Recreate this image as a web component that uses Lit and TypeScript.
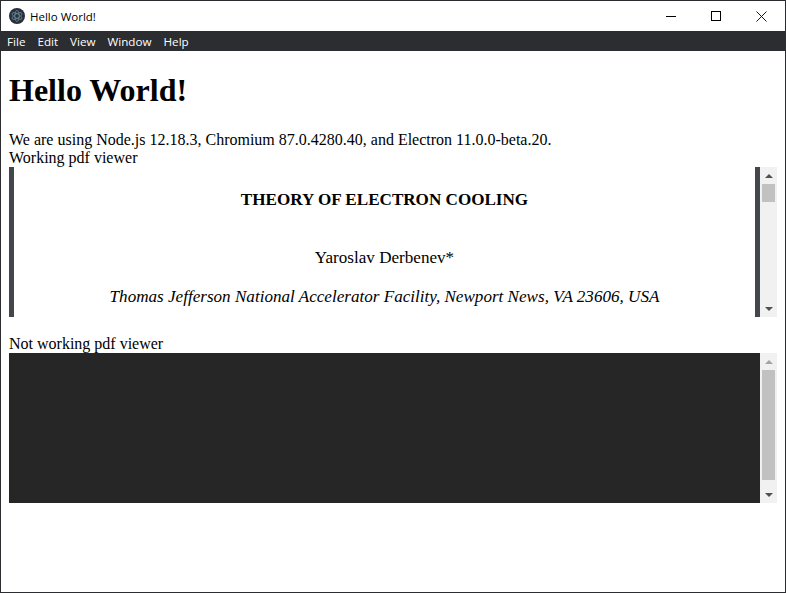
import { LitElement, html, css } from "lit";
import { customElement } from "lit/decorators.js";

@customElement("app-root")
export class AppRoot extends LitElement {
  static styles = css`
    :host { display: block; width: 786px; height: 593px; box-sizing: border-box; border: 1px solid #2b2d31; background: #fff; overflow: hidden; color: #000; font-family: "Liberation Serif", serif; font-size: 16px; line-height: 18px; }
    .title { height: 30px; display: flex; align-items: center; background: #fff; font: 11.5px "Open Sans", "Liberation Sans", sans-serif; padding-right: 1px; }
    .logo { width: 16px; height: 16px; margin: 0 5px 0 8px; flex: none; }
    .name { flex: 1; color: #000; }
    .ctl { width: 45px; height: 30px; display: flex; align-items: center; justify-content: center; }
    .menu { height: 20px; background: #2b2d31; color: #fff; display: flex; font: 11.65px "Open Sans", "Liberation Sans", sans-serif; align-items: center; padding-left: 6px; gap: 12px; }
    .page { padding: 0 8px; }
    h1 { font-size: 32px; line-height: 37px; font-weight: bold; margin: 21px 0 22px; }
    .block { display: block; height: 18px; }
    .viewer { display: flex; height: 150px; width: 768px; }
    .doc { flex: 1; min-width: 0; background: #fff; border-left: 5px solid #43464a; border-right: 5px solid #43464a; text-align: center; overflow: hidden; }
    .doc h2 { font-size: 17.1px; line-height: 21px; font-weight: bold; margin: 22px 0 0; }
    .doc p { font-size: 17.1px; line-height: 21px; margin: 0; }
    .author { padding-top: 37px; }
    .affil { padding-top: 18px; font-style: italic; }
    .dark { flex: 1; background: #262626; }
    .gap { height: 18px; }
    .sb { width: 17px; flex: none; background: #f1f1f1; display: flex; flex-direction: column; }
    .arrow { height: 17px; display: flex; align-items: center; justify-content: center; flex: none; }
    .track { flex: 1; min-height: 0; }
    .thumb { background: #c1c1c1; margin: 0 2px; }
    .s1 { height: 18px; }
    .s2 { height: 110px; }
  `;

  private up(c: string) {
    return html`<div class="arrow"><svg width="8" height="4" viewBox="0 0 8 4"><path d="M4 0 8 4H0Z" fill="${c}" /></svg></div>`;
  }
  private down(c: string) {
    return html`<div class="arrow"><svg width="8" height="4" viewBox="0 0 8 4"><path d="M0 0H8L4 4Z" fill="${c}" /></svg></div>`;
  }

  render() {
    return html`
      <div class="title">
        <svg class="logo" viewBox="0 0 16 16">
          <circle cx="8" cy="8" r="8" fill="#2b2e3a" />
          <g fill="none" stroke="#9feaf9" stroke-width="0.7" opacity="0.55">
            <ellipse cx="8" cy="8" rx="5.6" ry="2.2" transform="rotate(30 8 8)" />
            <ellipse cx="8" cy="8" rx="5.6" ry="2.2" transform="rotate(90 8 8)" />
            <ellipse cx="8" cy="8" rx="5.6" ry="2.2" transform="rotate(150 8 8)" />
          </g>
        </svg>
        <div class="name">Hello World!</div>
        <div class="ctl"><svg width="11" height="11" viewBox="0 0 11 11"><path d="M0 5.5H10" stroke="#000" fill="none" /></svg></div>
        <div class="ctl"><svg width="11" height="11" viewBox="0 0 11 11"><rect x="0.5" y="0.5" width="9" height="9" stroke="#000" fill="none" /></svg></div>
        <div class="ctl"><svg width="11" height="11" viewBox="0 0 11 11"><path d="M0.5 0.5 10.5 10.5M10.5 0.5 0.5 10.5" stroke="#000" stroke-width="0.9" fill="none" /></svg></div>
      </div>
      <div class="menu"><span>File</span><span>Edit</span><span>View</span><span>Window</span><span>Help</span></div>
      <div class="page">
        <h1>Hello World!</h1>
        <div class="block">We are using Node.js 12.18.3, Chromium 87.0.4280.40, and Electron 11.0.0-beta.20.</div>
        <div class="block">Working pdf viewer</div>
        <div class="viewer">
          <div class="doc">
            <h2>THEORY OF ELECTRON COOLING</h2>
            <p class="author">Yaroslav Derbenev*</p>
            <p class="affil">Thomas Jefferson National Accelerator Facility, Newport News, VA 23606, USA</p>
          </div>
          <div class="sb">
            ${this.up("#505050")}
            <div class="track"><div class="thumb s1"></div></div>
            ${this.down("#505050")}
          </div>
        </div>
        <div class="gap"></div>
        <div class="block">Not working pdf viewer</div>
        <div class="viewer">
          <div class="dark"></div>
          <div class="sb">
            ${this.up("#a3a3a3")}
            <div class="track"><div class="thumb s2"></div></div>
            ${this.down("#505050")}
          </div>
        </div>
      </div>
    `;
  }
}
